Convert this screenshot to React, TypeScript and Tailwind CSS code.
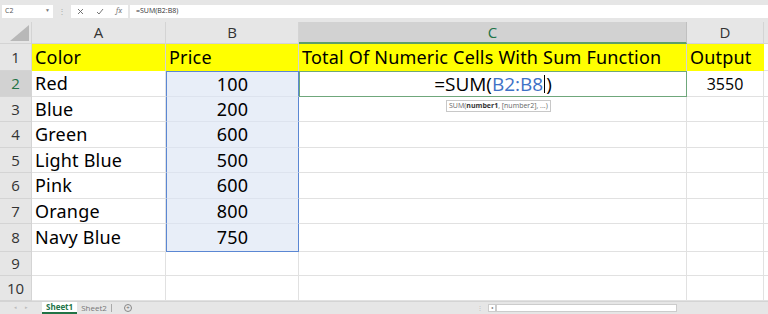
import React from "react";

const comic = { fontFamily: '"Comic Sans MS", "Noto Sans", "DejaVu Sans", sans-serif', letterSpacing: "0.2px" };

const rowsData: [string, string][] = [
  ["Red", "100"],
  ["Blue", "200"],
  ["Green", "600"],
  ["Light Blue", "500"],
  ["Pink", "600"],
  ["Orange", "800"],
  ["Navy Blue", "750"],
];

const heights = [26, 25, 26, 25, 26, 25, 28, 24, 25];

function RowHeader({ n, h, sel }: { n: number; h: number; sel?: boolean }) {
  return (
    <div
      className={`flex items-center justify-center border-r border-b border-[#d4d4d4] text-[15px] ${
        sel ? "bg-[#d2d2d2] text-[#217346]" : "bg-[#e6e6e6] text-[#333]"
      }`}
      style={{ height: h }}
    >
      {n}
    </div>
  );
}

export default function App() {
  return (
    <div className="w-[768px] h-[314px] overflow-hidden bg-white" style={{ fontFamily: '"Open Sans", "Liberation Sans", sans-serif' }}>
      {/* Formula bar */}
      <div className="h-[22px] bg-[#e6e6e6] flex items-center pl-[2px]">
        <div className="w-[51px] h-[13px] bg-white flex items-center justify-between px-[3px] text-[7px] text-[#555]">
          <span>C2</span>
          <span className="text-[5px] text-[#777]">▼</span>
        </div>
        <div className="w-[18px] flex justify-center text-[8px] text-[#aaa]">⋮</div>
        <div className="w-[57px] h-[13px] bg-white flex items-center justify-around text-[#666]">
          <svg width="7" height="7" viewBox="0 0 7 7"><path d="M1 1L6 6M6 1L1 6" stroke="#666" strokeWidth="0.9" /></svg>
          <svg width="8" height="7" viewBox="0 0 8 7"><path d="M1 4L3 6L7 1" stroke="#666" strokeWidth="0.9" fill="none" /></svg>
          <span className="text-[8px] italic font-serif text-[#777]">fx</span>
        </div>
        <div className="ml-[2px] flex-1 h-[13px] bg-white flex items-center pl-[6px] text-[7px] text-[#333]">=SUM(B2:B8)</div>
      </div>

      {/* Grid */}
      <div className="grid grid-cols-[32px_134px_133px_388px_77px_1fr]">
        {/* column headers */}
        <div className="h-[22px] bg-[#e6e6e6] border-r border-b border-[#d4d4d4] flex items-end justify-end p-[2px]">
          <svg width="22" height="16" viewBox="0 0 22 16"><path d="M22 0L22 16L3 16Z" fill="#b8b8b8" /></svg>
        </div>
        <div className="h-[22px] bg-[#e6e6e6] border-r border-b border-[#d4d4d4] flex items-center justify-center text-[15px] text-[#333]">A</div>
        <div className="h-[22px] bg-[#e6e6e6] border-r border-b border-[#d4d4d4] flex items-center justify-center text-[15px] text-[#333]">B</div>
        <div className="h-[22px] bg-[#d2d2d2] border-r border-[#c0c0c0] border-b-2 border-b-[#5d9e6a] flex items-center justify-center text-[15px] text-[#217346]">C</div>
        <div className="h-[22px] bg-[#e6e6e6] border-r border-b border-[#d4d4d4] flex items-center justify-center text-[15px] text-[#333]">D</div>
        <div className="h-[22px] bg-[#e6e6e6] border-b border-[#d4d4d4]"></div>

        {/* row 1 */}
        <RowHeader n={1} h={27} />
        <div className="h-[27px] bg-[#ffff00] border-r border-[#d4d4d4] flex items-center pl-[3px] text-[18px] text-black" style={comic}>Color</div>
        <div className="h-[27px] bg-[#ffff00] border-r border-[#d4d4d4] flex items-center pl-[3px] text-[18px] text-black" style={comic}>Price</div>
        <div className="h-[27px] bg-[#ffff00] border-r border-[#d4d4d4] flex items-center pl-[3px] text-[18px] text-black whitespace-nowrap overflow-hidden" style={comic}>Total Of Numeric Cells With Sum Function</div>
        <div className="h-[27px] bg-[#ffff00] flex items-center pl-[3px] text-[18px] text-black whitespace-nowrap" style={comic}>Output</div>
        <div className="h-[27px] border-b border-[#e1e1e1]"></div>

        {heights.map((h, i) => {
          const r = i + 2;
          const d = rowsData[i];
          const inSel = r >= 2 && r <= 8;
          return (
            <React.Fragment key={r}>
              <RowHeader n={r} h={h} sel={r === 2} />
              <div
                className="border-r border-b border-[#e1e1e1] flex items-center pl-[3px] text-[18px] text-black whitespace-nowrap"
                style={{ ...comic, height: h }}
              >
                {d ? d[0] : ""}
              </div>
              <div
                className={`flex items-center justify-center text-[18px] text-black ${
                  inSel
                    ? `bg-[#e8eef8] border-l border-l-[#5b87d3] border-r border-r-[#5b87d3] ${r === 8 ? "border-b border-b-[#5b87d3]" : "border-b border-b-[#dde3ee]"} ${r === 2 ? "border-t border-t-[#5b87d3]" : ""}`
                    : "border-r border-b border-[#e1e1e1]"
                }`}
                style={{ ...comic, height: h }}
              >
                {d ? d[1] : ""}
              </div>
              {r === 2 ? (
                <div className="relative border border-[#6fa77b] flex items-center justify-center text-[19px] text-black" style={{ height: h }}>
                  <span className="flex items-center" style={{ fontFamily: '"Open Sans", sans-serif' }}>
                    =SUM(<span className="text-[#3e72c6]">B2:B8</span>
                    <span className="inline-block w-px h-[18px] bg-black mx-[1px]"></span>)
                  </span>
                  <div className="absolute left-[146px] top-[28px] h-[12px] px-[2px] bg-white border border-[#c8c8c8] text-[7px] text-[#666] flex items-center whitespace-nowrap z-10">
                    SUM(<b className="text-[#333]">number1</b>, [number2], ...)
                  </div>
                </div>
              ) : (
                <div className="border-r border-b border-[#e1e1e1]" style={{ height: h }}></div>
              )}
              <div className="border-r border-b border-[#e1e1e1] flex items-center justify-center text-[16px] text-black" style={{ height: h }}>
                {r === 2 ? "3550" : ""}
              </div>
              <div className="border-b border-[#e1e1e1]" style={{ height: h }}></div>
            </React.Fragment>
          );
        })}
      </div>

      {/* Sheet tabs */}
      <div className="h-[13px] bg-[#e6e6e6] border-t border-[#d4d4d4] flex items-center text-[8px]">
        <div className="w-[42px] flex items-center justify-center gap-[8px] text-[5px] text-[#bbb]">
          <span>◂</span>
          <span>▸</span>
        </div>
        <div className="h-[12px] px-[4px] bg-white border-b-2 border-[#217346] text-[#217346] font-bold flex items-center">Sheet1</div>
        <div className="h-[12px] px-[4px] text-[#777] flex items-center">Sheet2</div>
        <div className="w-px h-[8px] bg-[#aaa]"></div>
        <div className="ml-[12px] w-[8px] h-[8px] rounded-full border border-[#888] flex items-center justify-center text-[6px] leading-none text-[#666]">+</div>
        <div className="ml-[345px] text-[#bbb] text-[6px]">⋮</div>
        <div className="ml-[5px] w-[8px] h-[8px] bg-white border border-[#ccc] flex items-center justify-center text-[4px] text-[#666]">◂</div>
        <div className="w-[181px] h-[8px] bg-white border border-[#ccc]"></div>
      </div>
    </div>
  );
}
